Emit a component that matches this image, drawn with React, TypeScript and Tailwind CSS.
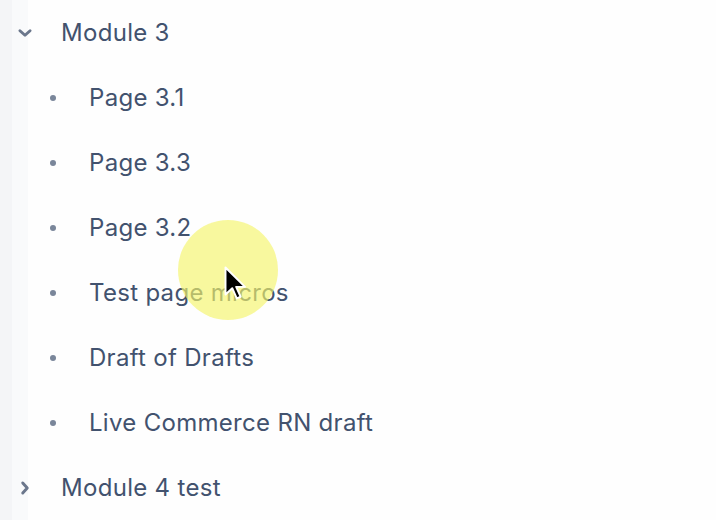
import React from "react";

type Item = { label: string };

const pages: Item[] = [
  { label: "Page 3.1" },
  { label: "Page 3.3" },
  { label: "Page 3.2" },
  { label: "Test page micros" },
  { label: "Draft of Drafts" },
  { label: "Live Commerce RN draft" },
];

function Chevron({ open }: { open: boolean }) {
  return (
    <svg
      viewBox="0 0 16 16"
      className={`w-[18px] h-[18px] text-[#6b778c] ${open ? "" : "-rotate-90"}`}
      fill="none"
      stroke="currentColor"
      strokeWidth="2.6"
      strokeLinecap="round"
      strokeLinejoin="round"
    >
      <path d="M3.5 6l4.5 4 4.5-4" />
    </svg>
  );
}

export default function App() {
  return (
    <div
      className="relative w-[716px] h-[520px] overflow-hidden bg-[#fefefe] flex"
      style={{ fontFamily: "Inter, 'Noto Sans', sans-serif" }}
    >
      {/* sidebar edge */}
      <div className="w-[12px] shrink-0 bg-[#f4f5f7]" />
      <div className="w-[16px] shrink-0 bg-[#f9fafb]" />

      <div className="flex-1 flex flex-col text-[#42526e] text-[24px] tracking-[0.3px]">
        <div className="h-[65px] flex items-center -ml-[14px]">
          <div className="w-[22px] flex justify-center">
            <Chevron open />
          </div>
          <span className="ml-[25px]">Module 3</span>
        </div>

        {pages.map((p) => (
          <div key={p.label} className="h-[65px] flex items-center">
            <div className="w-[50px] flex justify-center">
              <span className="block w-[6px] h-[6px] rounded-full bg-[#7a869a]" />
            </div>
            <span className="ml-[11px]">{p.label}</span>
          </div>
        ))}

        <div className="h-[65px] flex items-center -ml-[14px]">
          <div className="w-[22px] flex justify-center">
            <Chevron open={false} />
          </div>
          <span className="ml-[25px]">Module 4 test</span>
        </div>
      </div>

      {/* cursor highlight */}
      <div className="absolute left-[178px] top-[220px] w-[100px] h-[100px] rounded-full bg-[#f4f46a]/65" />
      <svg
        className="absolute left-[224px] top-[266px] w-[24px] h-[36px]"
        viewBox="0 0 16 24"
      >
        <path
          d="M1 1v18l4.5-4.2 3 6.8 2.6-1.1-3-6.6H14z"
          fill="#000"
          stroke="#fff"
          strokeWidth="1.3"
          strokeLinejoin="round"
        />
      </svg>
    </div>
  );
}
